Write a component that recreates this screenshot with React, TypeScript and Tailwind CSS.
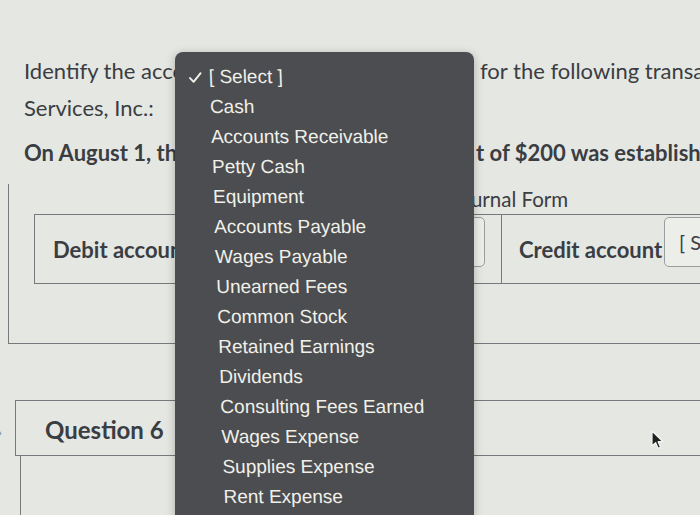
const ACCOUNT_OPTIONS = [
  "Cash",
  "Accounts Receivable",
  "Petty Cash",
  "Equipment",
  "Accounts Payable",
  "Wages Payable",
  "Unearned Fees",
  "Common Stock",
  "Retained Earnings",
  "Dividends",
  "Consulting Fees Earned",
  "Wages Expense",
  "Supplies Expense",
  "Rent Expense",
];

function SelectBox() {
  return (
    <div className="mt-[2px] flex h-[50px] w-[282px] shrink-0 items-center justify-between self-start rounded-[5px] border border-[#9a9da0] bg-[#eceeea] px-[14px] text-[20px] font-normal text-[#3a3d42]">
      <span>[ Select ]</span>
      <svg width="12" height="8" viewBox="0 0 12 8" fill="none" stroke="#6a6d70" strokeWidth="1.6">
        <path d="M1 1.5l5 5 5-5" />
      </svg>
    </div>
  );
}

function Cursor() {
  return (
    <svg className="absolute left-[651px] top-[430px]" width="14" height="20" viewBox="0 0 14 20">
      <path d="M1 1v15l3.6-3.4 2.5 5.6 2.4-1-2.4-5.5H12z" fill="#1d1f22" stroke="#f4f4f0" strokeWidth="1.2" strokeLinejoin="round" />
    </svg>
  );
}

export default function App() {
  return (
    <div className="relative h-[515px] w-[700px] overflow-hidden bg-[#e5e7e2] font-['Lato',sans-serif] text-[#3a3d42]">
      <div className="pl-[24px] pt-[52px] text-[22px] leading-[37px]">
        <div className="grid grid-cols-[456px_1fr] whitespace-nowrap">
          <span>Identify the account(s)</span>
          <span className="overflow-hidden">for the following transactions of Spencer Consulting</span>
          <span>Services, Inc.:</span>
          <span />
        </div>
        <div className="mt-[8px] grid grid-cols-[452px_1fr] whitespace-nowrap font-bold">
          <span>On August 1, the petty cash fund</span>
          <span className="overflow-hidden">t of $200 was established.</span>
        </div>
      </div>

      <div className="ml-[8px] mt-[13px] border-b border-l border-[#77797c]">
        <div className="h-[30px] whitespace-nowrap pl-[442px] text-[20.5px] leading-[30px]">Journal Form</div>
        <div className="ml-[25px] flex h-[70px] whitespace-nowrap border-y border-l border-[#77797c] text-[22px] font-bold">
          <div className="flex w-[168px] shrink-0 items-center pl-[18px]">Debit account</div>
          <SelectBox />
          <div className="w-[17px] shrink-0 border-r border-[#77797c]" />
          <div className="flex w-[162px] shrink-0 items-center pl-[17px]">Credit account</div>
          <SelectBox />
        </div>
        <div className="h-[59px]" />
      </div>

      <div className="ml-[15px] mt-[56px] flex h-[56px] items-center border border-r-0 border-[#77797c] pl-[29px] pt-[4px] text-[24px] font-bold">
        Question 6
      </div>
      <div className="ml-[20px] h-[70px] border-l border-[#77797c]" />

      <span className="absolute left-[-3px] top-[418px] text-[18px] text-[#8a8d90]">›</span>
      <Cursor />

      <div className="absolute left-[175px] top-[52px] h-[480px] w-[299px] rounded-t-[8px] bg-[#4b4d51] font-['Liberation_Sans',sans-serif] text-[19px] text-[#f1f0e8] shadow-[0_2px_10px_rgba(0,0,0,0.25)]">
        <ul className="origin-top skew-x-[2deg] pt-[10px]">
          <li className="flex h-[30px] items-center">
            <svg className="ml-[12px] mr-[6px]" width="15" height="15" viewBox="0 0 14 14" fill="none" stroke="#f1f0e8" strokeWidth="1.8" strokeLinecap="round" strokeLinejoin="round">
              <path d="M2 7.5l3.2 3.5L12 3" />
            </svg>
            <span>[ Select ]</span>
          </li>
          {ACCOUNT_OPTIONS.map((option) => (
            <li key={option} className="flex h-[30px] items-center pl-[33px]">
              {option}
            </li>
          ))}
        </ul>
      </div>
    </div>
  );
}
